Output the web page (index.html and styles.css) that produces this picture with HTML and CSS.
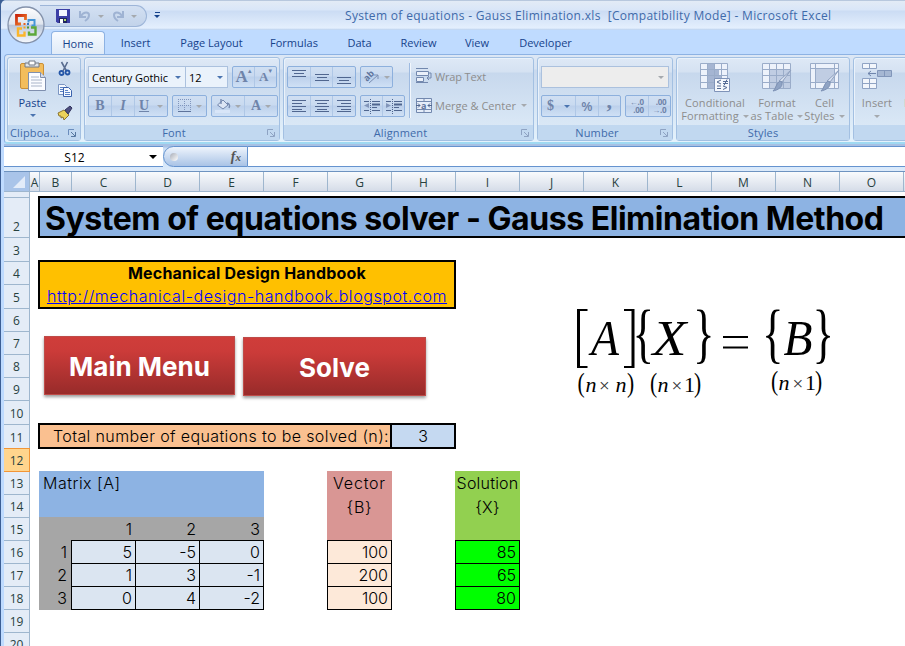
FILE: index.html
```html
<!DOCTYPE html>
<html lang="en">
<head>
  <meta charset="UTF-8">
  <meta name="viewport" content="width=device-width, initial-scale=1.0">
  <title>System of equations - Gauss Elimination.xls</title>
  <link rel="stylesheet" href="styles.css">
</head>
<body>
  <div class="window">
    <header class="titlebar">
      <div class="quick-access">
        <svg width="14" height="14" viewBox="0 0 14 14"><path d="M0 0h14v14H1.500L0 12.500z" fill="#3c3fa6"/><path d="M3 1h8v6H3z" fill="#f4f6ff"/><path d="M3 9h8v5H3z" fill="#20245f"/><path d="M4 10h3v4H4z" fill="#fff"/><path d="M8 10h2v2H8z" fill="#b6df6f"/></svg>
        <svg class="undo" width="12" height="12" viewBox="0 0 12 12"><path d="M1 1v6h6M2 6c3-5 8-4 8-1 0 2-1 4-4 6" fill="none" stroke="#9fb3d3" stroke-width="2"/></svg>
        <i class="arrow pale"></i>
        <svg class="redo" width="12" height="12" viewBox="0 0 12 12"><path d="M11 1v6H5M10 6C7 1 2 2 2 5c0 2 1 4 4 6" fill="none" stroke="#9fb3d3" stroke-width="2"/></svg>
        <i class="arrow pale"></i>
      </div>
      <div class="customize"><i></i><i class="arrow"></i></div>
      <div class="title">System of equations - Gauss Elimination.xls&nbsp; [Compatibility Mode] - Microsoft Excel</div>
    </header>

    <svg class="office" width="38" height="38" viewBox="0 0 38 38">
      <defs>
        <linearGradient id="orb" x1="0" y1="0" x2="0" y2="1"><stop offset="0" stop-color="#fff"/><stop offset=".48" stop-color="#dfe5ee"/><stop offset=".5" stop-color="#b9c6da"/><stop offset="1" stop-color="#f6f9fd"/></linearGradient>
        <linearGradient id="red" x1="0" y1="0" x2="1" y2="1"><stop offset="0" stop-color="#c9260c"/><stop offset="1" stop-color="#f58a2c"/></linearGradient>
      </defs>
      <circle cx="19" cy="19" r="18" fill="url(#orb)" stroke="#8492ab" stroke-width="1.300"/>
      <g fill="none">
        <path d="M14 18H9.500V9.500h9V14" stroke="url(#red)" stroke-width="2.800"/>
        <path d="M21.500 16.500v-2.500h6v5.500h-3" stroke="#4596d8" stroke-width="2"/>
        <path d="M15 22.500h-4v7h6.500v-4" stroke="#fbb52a" stroke-width="2.400"/>
        <path d="M24 21.500h4.500v7h-6.500v-3" stroke="#5da83a" stroke-width="2.400"/>
      </g>
      <path d="M16.500 17h2v2h-2z" fill="#e85f1a"/><path d="M20 17h2v2h-2z" fill="#3577c4"/><path d="M16.500 20.500h2v2h-2z" fill="#f6a51c"/><path d="M20 20.500h2v2h-2z" fill="#4a9a30"/>
    </svg>

    <nav class="tabs">
      <span class="tab active">Home</span>
      <span class="tab insert">Insert</span>
      <span class="tab layout">Page Layout</span>
      <span class="tab formulas">Formulas</span>
      <span class="tab data">Data</span>
      <span class="tab review">Review</span>
      <span class="tab view">View</span>
      <span class="tab developer">Developer</span>
    </nav>

    <section class="ribbon">
      <div class="group clipboard">
        <div class="tools">
          <div class="paste">
            <svg width="26" height="30" viewBox="0 0 26 30"><rect x=".5" y="2.500" width="23" height="25" rx="1.500" fill="#f3bd5c" stroke="#c98f38"/><path d="M5 2h14v4H5z" fill="#dfe3e8" stroke="#717885"/><path d="M9 0h6v4H9z" fill="#fff" stroke="#717885"/><path d="M8.500 11.500h12l5 5v13h-17z" fill="#fbfcff" stroke="#7f8fae"/><path d="M20.500 11.500v5h5" fill="#d5dcea" stroke="#7f8fae"/><path d="M11 16h8M11 19h11M11 22h11M11 25h11" stroke="#a9b4c8"/></svg>
            <span>Paste</span>
            <i class="arrow"></i>
          </div>
          <div class="clip-icons">
            <svg width="16" height="16" viewBox="0 0 16 16"><path d="M4.500 1l5 9M10.500 1L6 10" stroke="#5b6e91" stroke-width="1.600"/><circle cx="4.500" cy="12" r="2" fill="none" stroke="#2456a8" stroke-width="1.800"/><circle cx="10.500" cy="11.500" r="2" fill="none" stroke="#2456a8" stroke-width="1.800"/></svg>
            <svg width="16" height="16" viewBox="0 0 16 16"><path d="M1.500 1.500h6l2 2v8h-8z" fill="#f5f9ff" stroke="#7b95c2"/><path d="M3 4.500h4M3 6.500h4M3 8.500h3" stroke="#5a82c6"/><path d="M6.500 4.500h5l3 3v6h-8z" fill="#f5f9ff" stroke="#3b62ad"/><path d="M8 7.500h3M8 9.500h5M8 11.500h5" stroke="#5a82c6"/></svg>
            <svg width="16" height="16" viewBox="0 0 16 16"><path d="M1 8l6-3 5 5-5 5-1-3-2 1 0-2-2 0z" fill="#ecd25a" stroke="#8b7533"/><path d="M8 5l5-4 2 2-4 6z" fill="#4d4f80" stroke="#32335c"/></svg>
          </div>
        </div>
        <div class="caption"><span>Clipboa...</span><svg class="launcher" width="8" height="8" viewBox="0 0 8 8"><path d="M.5 6V.5H6" fill="none" stroke="#6b8dbd"/><path d="M3 3l4 4M7.500 3v4.500H3" fill="none" stroke="#56779f"/></svg></div>
      </div>

      <div class="group font">
        <div class="tools rows">
          <div class="row">
            <div class="combo family">Century Gothic<i class="arrow"></i></div>
            <div class="combo size">12<i class="arrow"></i></div>
            <div class="set grow">
              <b class="serif big">A<sup>▴</sup></b><b class="serif small">A<sup>▾</sup></b>
            </div>
          </div>
          <div class="row">
            <div class="set biu"><b class="serif">B</b><b class="serif"><em>I</em></b><b class="serif underline"><u>U</u><i class="arrow pale"></i></b></div>
            <div class="set borders"><b><svg width="14" height="14" viewBox="0 0 14 14"><path d="M.5 0v12M6.500 0v12M12.500 0v12M0 .5h14M0 6.500h14" stroke="#8095bd" stroke-dasharray="1 1" fill="none"/><path d="M0 12.500h13" stroke="#5e739b"/></svg><i class="arrow pale"></i></b></div>
            <div class="set fills">
              <b><svg width="16" height="16" viewBox="0 0 16 16"><path d="M2.500 7L8 2l5 5-5 4z" fill="#dce5f4" stroke="#7488ae"/><path d="M6 1v5M12 5c3 1 3 3 2 5" fill="none" stroke="#7488ae" stroke-width="1.400"/><path d="M0 12h15v3H0z" fill="#d8e5f8"/></svg><i class="arrow pale"></i></b>
              <b class="serif">A<i class="arrow pale"></i></b>
            </div>
          </div>
        </div>
        <div class="caption"><span>Font</span><svg class="launcher dim" width="8" height="8" viewBox="0 0 8 8"><path d="M.5 6V.5H6" fill="none" stroke="#8297b8"/><path d="M3 3l4 4M7.500 3v4.500H3" fill="none" stroke="#8297b8"/></svg></div>
      </div>

      <div class="group alignment">
        <div class="tools">
          <div class="rows">
            <div class="row">
              <div class="set three">
                <b><svg width="14" height="14" viewBox="0 0 14 14"><path d="M0 .5h14M2 3.500h10M0 6.500h14" stroke="#50668f"/></svg></b>
                <b><svg width="14" height="14" viewBox="0 0 14 14"><path d="M0 4.500h14M2 7.500h10M0 10.500h14" stroke="#50668f"/></svg></b>
                <b><svg width="14" height="14" viewBox="0 0 14 14"><path d="M0 7.500h14M2 10.500h10M0 13.500h14" stroke="#50668f"/></svg></b>
              </div>
              <div class="set orient"><b><svg width="17" height="16" viewBox="0 0 17 16"><text x="1" y="10" transform="rotate(-45 6 8)" class="glyph">ab</text><path d="M6 14l9-8M15 10V6h-4" stroke="#7b8fb3" fill="none"/></svg><i class="arrow pale"></i></b></div>
            </div>
            <div class="row">
              <div class="set three">
                <b><svg width="14" height="14" viewBox="0 0 14 14"><path d="M0 1.500h14M0 4.500h10M0 7.500h14M0 10.500h10M0 12.500h14" stroke="#50668f"/></svg></b>
                <b><svg width="14" height="14" viewBox="0 0 14 14"><path d="M0 1.500h14M2 4.500h10M0 7.500h14M2 10.500h10M0 12.500h14" stroke="#50668f"/></svg></b>
                <b><svg width="14" height="14" viewBox="0 0 14 14"><path d="M0 1.500h14M4 4.500h10M0 7.500h14M4 10.500h10M0 12.500h14" stroke="#50668f"/></svg></b>
              </div>
              <div class="set indent">
                <b><svg width="16" height="15" viewBox="0 0 16 15"><path d="M0 2.500h5M8 2.500h8M8 8.500h5M0 11.500h5M8 11.500h8" stroke="#50668f"/><path d="M8 5.500h8" stroke="#50668f" stroke-width="2"/><path d="M6.500 0v15" stroke="#50668f" stroke-dasharray="1 1"/><path d="M5 4v5L0 6.500z" fill="#8296ba"/></svg></b>
                <b><svg width="16" height="15" viewBox="0 0 16 15"><path d="M0 2.500h5M8 2.500h8M8 8.500h5M0 11.500h5M8 11.500h8" stroke="#50668f"/><path d="M8 5.500h8" stroke="#50668f" stroke-width="2"/><path d="M6.500 0v15" stroke="#50668f" stroke-dasharray="1 1"/><path d="M0 4v5l5-2.500z" fill="#8296ba"/></svg></b>
              </div>
            </div>
          </div>
          <div class="divider"></div>
          <div class="wide">
            <div class="wide-btn"><svg width="16" height="16" viewBox="0 0 16 16"><path d="M0 .5h12M0 14.500h12" stroke="#7288ae"/><path d="M.5 3.500h12v4H.5zM.5 9.500h7v4h-7z" fill="#eaf0fa" stroke="#7288ae"/><path d="M12 5h3v5h-4m2-2l-2 2 2 2" fill="none" stroke="#7288ae"/></svg><span class="wrap-text">Wrap Text</span></div>
            <div class="wide-btn"><svg width="16" height="15" viewBox="0 0 16 15"><path d="M.5.5h15v14H.5zM.5 3.500h15M.5 11.500h15M8 0v4M8 11v4" fill="#e5edf9" stroke="#7288ae"/><path d="M0 7.500h4M12 7.500h4M2 5.500l2 2-2 2M14 5.500l-2 2 2 2" fill="none" stroke="#50668f"/><text x="5" y="10.500" class="glyph">a</text></svg><span class="merge">Merge &amp; Center</span><i class="arrow pale"></i></div>
          </div>
        </div>
        <div class="caption"><span>Alignment</span><svg class="launcher dim" width="8" height="8" viewBox="0 0 8 8"><path d="M.5 6V.5H6" fill="none" stroke="#8297b8"/><path d="M3 3l4 4M7.500 3v4.500H3" fill="none" stroke="#8297b8"/></svg></div>
      </div>

      <div class="group number">
        <div class="tools rows">
          <div class="row"><div class="combo format"><i class="arrow pale"></i></div></div>
          <div class="row">
            <div class="set money"><b class="serif dollar">$<i class="arrow"></i></b><b class="percent">%</b><b class="serif comma">,</b></div>
            <div class="set decimals"><b><span class="dec">←.0<br>.00</span></b><b><span class="dec">.00<br>→.0</span></b></div>
          </div>
        </div>
        <div class="caption"><span>Number</span><svg class="launcher dim" width="8" height="8" viewBox="0 0 8 8"><path d="M.5 6V.5H6" fill="none" stroke="#8297b8"/><path d="M3 3l4 4M7.500 3v4.500H3" fill="none" stroke="#8297b8"/></svg></div>
      </div>

      <div class="group styles">
        <div class="tools">
          <div class="large conditional">
            <svg width="30" height="29" viewBox="0 0 30 29"><path d="M.5.500h27v25H.5z" fill="#edf2fb"/><path d="M7 1h7v24H7zM14 7h5v6h-5zM14 13h7v6h-7z" fill="#a5b5d2"/><path d="M.5.500h27v25H.5zM.5 6.500h27M.5 12.500h27M.5 19.500h27M7.500.500v25M14.500.500v25M21.500.500v25" fill="none" stroke="#9aacc9"/><path d="M14.500 15.500h15v13h-15z" fill="#f5f8fd" stroke="#7f93b8"/><path d="M21 17l-4 2 4 2M17 23h4M17 25.500h4M23 18.500h5M23 20.500h5M27 16.500l-3 6M23 23l4 1.500-4 2" fill="none" stroke="#566c95"/></svg>
            <span>Conditional<br>Formatting<i class="arrow pale"></i></span>
          </div>
          <div class="large table-style">
            <svg width="30" height="29" viewBox="0 0 30 29"><path d="M.5.500h28v25H.5z" fill="#edf2fb"/><path d="M7.500 6.500h21v19h-21z" fill="#c0cde3"/><path d="M.5.500h28v25H.5zM.5 6.500h28M.5 12.500h28M.5 19.500h28M7.500.500v25M14.500.500v25M21.500.500v25" fill="none" stroke="#9aacc9"/><path d="M29 7L20 19l-3-1z" fill="#dde5f2" stroke="#8fa1c0"/><path d="M20 19c1 5-4 8-9 9 3-2 3-8 7-10z" fill="#8fa3c4" stroke="#7d91b4"/></svg>
            <span>Format<br>as Table<i class="arrow pale"></i></span>
          </div>
          <div class="large cell-style">
            <svg width="30" height="29" viewBox="0 0 30 29"><path d="M.5.500h28v25H.5z" fill="#edf2fb" stroke="#9aacc9"/><path d="M5.500 5.500h19v14h-19z" fill="#c0cde3" stroke="#9aacc9"/><path d="M5.500 0v26M24.500 0v26M0 5.500h29M0 19.500h29" stroke="#9aacc9"/><path d="M29 7L20 19l-3-1z" fill="#dde5f2" stroke="#8fa1c0"/><path d="M20 19c1 5-4 8-9 9 3-2 3-8 7-10z" fill="#8fa3c4" stroke="#7d91b4"/></svg>
            <span>Cell<br>Styles<i class="arrow pale"></i></span>
          </div>
        </div>
        <div class="caption"><span>Styles</span></div>
      </div>

      <div class="group cells">
        <div class="tools">
          <div class="large insert-cells">
            <svg width="30" height="27" viewBox="0 0 30 27"><path d="M.5.500h14v5H.5zM7.500.500v5M.5 15.500h14v10H.5zM7.500 15.500v10M.5 20.500h14" fill="#f2f6fc" stroke="#8fa3c4"/><path d="M15.500 7.500h14v6h-14zM22.500 7.500v6" fill="#a5b7d3" stroke="#8196ba"/><path d="M6 10.500h8M9 8l-3 2.500L9 13" fill="none" stroke="#6f85ac"/></svg>
            <span>Insert<br><i class="arrow pale"></i></span>
          </div>
          <div class="large delete-cells"><span>Delete</span></div>
        </div>
        <div class="caption"></div>
      </div>
    </section>

    <div class="formula-bar">
      <div class="name-box"><span>S12</span><i class="arrow black"></i></div>
      <div class="fx"><i class="knob"></i><span><em>f</em><em class="sub">x</em></span></div>
      <div class="formula"></div>
    </div>

    <main class="sheet">
      <div class="col corner"><svg width="12" height="12" viewBox="0 0 12 12"><path d="M12 0v12H0z" fill="#e3ecf9"/></svg></div>
      <div class="col">A</div><div class="col">B</div><div class="col">C</div><div class="col">D</div><div class="col">E</div><div class="col">F</div><div class="col">G</div><div class="col">H</div><div class="col">I</div><div class="col">J</div><div class="col">K</div><div class="col">L</div><div class="col">M</div><div class="col">N</div><div class="col">O</div><div class="col"></div>

      <div class="row-head r1"></div>
      <div class="row-head r2">2</div>
      <div class="row-head r3">3</div>
      <div class="row-head r4">4</div>
      <div class="row-head r5">5</div>
      <div class="row-head r6">6</div>
      <div class="row-head r7">7</div>
      <div class="row-head r8">8</div>
      <div class="row-head r9">9</div>
      <div class="row-head r10">10</div>
      <div class="row-head r11">11</div>
      <div class="row-head r12 selected">12</div>
      <div class="row-head r13">13</div>
      <div class="row-head r14">14</div>
      <div class="row-head r15">15</div>
      <div class="row-head r16">16</div>
      <div class="row-head r17">17</div>
      <div class="row-head r18">18</div>
      <div class="row-head r19">19</div>
      <div class="row-head r20">20</div>

      <div class="heading">System of equations solver - Gauss Elimination Method</div>
      <div class="handbook">
        <strong>Mechanical Design Handbook</strong>
        <a href="#">http://mechanical-design-handbook.blogspot.com</a>
      </div>
      <div class="total"><div class="total-label">Total number of equations to be solved (n):</div><div class="total-value">3</div></div>

      <div class="matrix-title">Matrix [A]</div>
      <div class="matrix-head">
        <span></span><span>1</span><span>2</span><span>3</span>
      </div>
      <div class="matrix-side"><span>1</span><span>2</span><span>3</span></div>
      <div class="matrix values">
        <span>5</span><span>-5</span><span>0</span>
        <span>1</span><span>3</span><span>-1</span>
        <span>0</span><span>4</span><span>-2</span>
      </div>

      <div class="vector-title">Vector<br>{B}</div>
      <div class="vector values"><span>100</span><span>200</span><span>100</span></div>
      <div class="solution-title">Solution<br>{X}</div>
      <div class="solution values"><span>85</span><span>65</span><span>80</span></div>

      <button class="shape main-menu">Main Menu</button>
      <button class="shape solve">Solve</button>

      <svg class="equation" width="270" height="100" viewBox="570 303 270 100">
        <path d="M587.500 310h-9v57h9M624 310h9v57h-9" fill="none" stroke="#000" stroke-width="2"/>
        <path d="M578.500 309v59M633 309v59" stroke="#000" stroke-width="3"/>
        <g class="brace">
          <text transform="translate(632.500 354.500) scale(.68 1)">{</text>
          <text transform="translate(693 354.500) scale(.68 1)">}</text>
          <text transform="translate(762 354.500) scale(.68 1)">{</text>
          <text transform="translate(812.500 354.500) scale(.68 1)">}</text>
        </g>
        <g class="var">
          <text x="591" y="355" textLength="28" lengthAdjust="spacingAndGlyphs">A</text>
          <text x="652.500" y="355" textLength="34" lengthAdjust="spacingAndGlyphs">X</text>
          <text x="783.500" y="355" textLength="29" lengthAdjust="spacingAndGlyphs">B</text>
        </g>
        <path d="M723 337h25M723 347.500h25" stroke="#000" stroke-width="2"/>
        <g class="paren">
          <text transform="translate(577.500 392) scale(.8 1)">(</text><text transform="translate(627 392) scale(.8 1)">)</text>
          <text transform="translate(650 392) scale(.8 1)">(</text><text transform="translate(694 392) scale(.8 1)">)</text>
          <text transform="translate(771 390) scale(.8 1)">(</text><text transform="translate(815 390) scale(.8 1)">)</text>
        </g>
        <g class="dim-text">
          <text x="585.500" y="392" class="it">n</text><text x="615.500" y="392" class="it">n</text>
          <text x="657.500" y="392" class="it">n</text><text x="684" y="392">1</text>
          <text x="778.500" y="390" class="it">n</text><text x="805" y="390">1</text>
        </g>
        <g class="times">
          <text x="599" y="392">×</text><text x="671.500" y="392">×</text><text x="792.500" y="390">×</text>
        </g>
      </svg>
    </main>
  </div>
</body>
</html>
```

FILE: styles.css
```css
* {
  box-sizing: border-box;
}

body {
  margin: 0;
  height: 646px;
  overflow: hidden;
  font-family: 'Open Sans', 'Noto Sans', sans-serif;
  font-size: 11px;
  color: #15428b;
  background: #3d5f95;
}

.window {
  position: relative;
  height: 646px;
  display: flex;
  flex-direction: column;
  border-left: 1px solid #3d5f95;
  border-radius: 6px 0 0 0;
  background: #bfdbff;
  overflow: hidden;
}

svg {
  flex: none;
  display: block;
  overflow: visible;
}

.arrow {
  display: inline-block;
  flex: none;
  border: 3px solid transparent;
  border-top-color: #4a74b0;
  border-bottom: 0;
}

.arrow.pale {
  border-top-color: #a5a9ae;
}

.arrow.black {
  border-width: 4px 4px 0;
  border-top-color: #000;
}

/* title bar */
.titlebar {
  height: 30px;
  flex: none;
  display: flex;
  align-items: flex-start;
  background: linear-gradient(#e3ebf6 0, #d9e6f8 9px, #cbdcf4 10px, #e4effd 27px, #b9d0ee 29px);
  border-top: 1px solid #b8c8de;
}

.quick-access {
  width: 107px;
  height: 22px;
  margin: 4px 0 0 39px;
  padding-left: 16px;
  display: flex;
  align-items: center;
  border: 1px solid #9db5d8;
  border-left: 0;
  border-radius: 0 11px 11px 0;
  background: linear-gradient(#d3e0f2, #c2d3ea);
}

.undo {
  margin: 0 7px 0 9px;
}

.redo {
  margin: 0 7px 0 8px;
}

.customize {
  display: flex;
  flex-direction: column;
  align-items: center;
  gap: 2px;
  margin: 11px 0 0 7px;
}

.customize i:first-child {
  width: 5px;
  height: 1px;
  background: #15428b;
}

.customize .arrow {
  border-top-color: #15428b;
}

.title {
  margin: 6px 0 0 185px;
  font-size: 12px;
  line-height: 17px;
  white-space: nowrap;
  color: #3e6aaa;
  letter-spacing: 0.32px;
}

.office {
  position: absolute;
  left: 6px;
  top: 6px;
}

/* tabs */
.tabs {
  height: 24px;
  flex: none;
  display: flex;
  padding-left: 50px;
  line-height: 26px;
}

.tab {
  text-align: center;
  white-space: nowrap;
}

.active {
  width: 54px;
  margin-top: 1px;
  height: 24px;
  line-height: 23px;
  border: 1px solid #8db2e3;
  border-bottom: 0;
  border-radius: 4px 4px 0 0;
  background: linear-gradient(#f6faff, #dfeaf7);
}

.insert { width: 61px; }
.layout { width: 91px; }
.formulas { width: 74px; }
.data { width: 57px; }
.review { width: 61px; }
.view { width: 56px; }
.developer { width: 81px; }

/* ribbon */
.ribbon {
  height: 90px;
  flex: none;
  display: flex;
  gap: 3px;
  margin-left: 3px;
  padding: 2px 0 4px 2px;
  border: 1px solid #8db2e3;
  border-right: 0;
  border-bottom: 2px solid #9fd9f2;
  border-radius: 4px 0 0 4px;
  background: linear-gradient(#dce7f5 0, #d5e2f2 14px, #c9d9ee 15px, #e4f2fc);
}

.group {
  flex: none;
  display: flex;
  flex-direction: column;
  height: 84px;
  border: 1px solid #a3c0e2;
  border-radius: 3px;
  background: linear-gradient(#dee9f6 0, #d5e2f2 14px, #c7d8ed 15px, #dae8f6 68px);
  box-shadow: inset 1px 1px 0 #eaf2fb;
}

.clipboard { width: 74px; }
.font { width: 196px; }
.alignment { width: 251px; }
.number { width: 136px; }
.styles { width: 174px; }
.cells { width: 120px; }

.tools {
  height: 67px;
  flex: none;
  display: flex;
}

.caption {
  flex: 1;
  display: flex;
  align-items: center;
  justify-content: center;
  line-height: 14px;
  color: #3e6aaa;
  background: #c1d8f0;
}

.caption span {
  flex: 1;
  text-align: center;
  padding-right: 4px;
  letter-spacing: 0.15px;
}

.clipboard .caption span {
  padding: 0;
  text-align: left;
  margin-left: 2px;
}

.launcher {
  margin-right: 4px;
}

.dim {
  opacity: 0.8;
}

.paste {
  width: 49px;
  display: flex;
  flex-direction: column;
  align-items: center;
  padding-top: 3px;
}

.paste span {
  margin-top: 4px;
  line-height: 16px;
}

.paste .arrow {
  margin-top: 3px;
}

.clip-icons {
  display: flex;
  flex-direction: column;
  gap: 6px;
  padding-top: 3px;
}

.rows {
  display: flex;
  flex-direction: column;
  gap: 7px;
  padding: 8px 0 0 3px;
}

.row {
  height: 22px;
  display: flex;
  gap: 4px;
}

.combo {
  display: flex;
  align-items: center;
  justify-content: space-between;
  height: 22px;
  padding: 0 4px 0 3px;
  border: 1px solid #abc1de;
  background: #eaf2fb;
  color: #000;
  white-space: nowrap;
}

.family {
  width: 98px;
  letter-spacing: -0.05px;
}

.size {
  width: 43px;
  margin-left: -5px;
}

.format {
  width: 128px;
  justify-content: flex-end;
  background: #ededed;
}

.set {
  display: flex;
  height: 22px;
  border: 1px solid #8db0dd;
  border-radius: 2px;
  background: linear-gradient(#d0dff2 0, #c9daf0 9px, #bcd0eb 10px, #cfe0f5);
}

.set b {
  flex: 1;
  display: flex;
  align-items: center;
  justify-content: center;
  gap: 4px;
  font-weight: normal;
  color: #6f84aa;
}

.set b + b {
  border-left: 1px solid #afc7e6;
}

.set .serif {
  font: bold 14px 'Liberation Serif', serif;
}

.set .big {
  font-size: 17px;
}

.set .small {
  font-size: 13px;
}

.set sup {
  font: 7px 'DejaVu Sans', sans-serif;
  align-self: flex-start;
  margin-left: -4px;
}

.grow { width: 45px; }
.biu { width: 80px; }
.biu .underline { flex: 0 0 33px; gap: 8px; }
.borders { width: 35px; }
.fills { width: 67px; }
.three { width: 69px; }
.orient { width: 33px; }
.indent { width: 45px; }
.money { width: 80px; }
.money .dollar { flex: 0 0 33px; gap: 10px; }
.decimals { width: 46px; }

.set .percent {
  font-size: 13px;
  font-weight: 600;
}

.set .comma {
  font-size: 22px;
  padding-bottom: 10px;
}

.dec {
  font: bold 8px/8px 'Open Sans', sans-serif;
  text-align: right;
  letter-spacing: -0.3px;
}

.glyph {
  font: bold 9px 'Open Sans', sans-serif;
  fill: #60769e;
}

.divider {
  width: 2px;
  height: 55px;
  margin: 5px 0 0 4px;
  border-left: 1px solid #9ebae0;
  border-right: 1px solid #f2f7fd;
}

.wide {
  display: flex;
  flex-direction: column;
  gap: 13px;
  padding: 10px 0 0 5px;
  color: #8d8d8d;
}

.wide-btn {
  display: flex;
  align-items: center;
  gap: 3px;
  height: 16px;
  white-space: nowrap;
}

.wrap-text {
  letter-spacing: -0.15px;
}

.wide-btn .arrow {
  margin-left: 2px;
}

.large {
  display: flex;
  flex-direction: column;
  align-items: center;
  padding-top: 5px;
  color: #8d8d8d;
  white-space: nowrap;
  text-align: center;
  line-height: 13px;
}

.large span {
  margin-top: 4px;
  letter-spacing: 0.1px;
}

.large .arrow {
  margin: 0 0 2px 4px;
}

.conditional { width: 76px; }
.table-style { width: 48px; }
.cell-style { width: 47px; }
.insert-cells { width: 46px; }

.insert-cells span {
  margin-top: 6px;
}

.insert-cells .arrow {
  margin-left: 0;
}

.delete-cells {
  padding: 38px 0 0 4px;
}

.delete-cells span {
  margin: 0;
}

.styles .caption span {
  padding: 0;
}

/* formula bar */
.formula-bar {
  height: 28px;
  flex: none;
  display: flex;
  margin-left: 3px;
  padding: 2px 0 4px;
  border-bottom: 1px solid #6e93c0;
  background: linear-gradient(#a8c1e4 0, #a8c1e4 3px, #c8ddf5 4px, #dcebfb);
}

.name-box {
  width: 159px;
  display: flex;
  align-items: center;
  border: solid #6593cf;
  border-width: 1px 0;
  background: #fff;
  color: #000;
  font-size: 12px;
}

.name-box span {
  flex: 1;
  text-align: center;
  padding-right: 4px;
  padding-top: 1px;
}

.name-box .arrow {
  margin-right: 6px;
}

.fx {
  width: 85px;
  display: flex;
  align-items: center;
  justify-content: space-between;
  padding: 0 6px 0 6px;
  border: 1px solid #6593cf;
  border-radius: 11px 0 0 11px;
  background: linear-gradient(#eef4fc, #a9c3e6);
  font: bold 14px 'Liberation Serif', serif;
  color: #555;
}

.fx .sub {
  font-size: 11px;
}

.knob {
  width: 8px;
  height: 8px;
  border-radius: 50%;
  background: linear-gradient(135deg, #a8adb8, #fff);
}

.formula {
  flex: 1;
  border: solid #6593cf;
  border-width: 1px 0;
  background: #fff;
}

/* worksheet */
.sheet {
  position: relative;
  flex: 1;
  margin-left: 3px;
  display: grid;
  grid-template-columns: 26px 10px 32px repeat(14, 64px);
  grid-template-rows: 20px 6px 40px 24px 23px 24px 23px 23px 23px 23px 24px 24px 23px repeat(8, 23px);
  overflow: hidden;
  background: #fff;
  color: #000;
  font-family: 'Century Gothic', Inter, sans-serif;
  font-size: 16px;
  font-weight: 300;
}

.col,
.row-head {
  border-right: 1px solid #9eb6ce;
  border-bottom: 1px solid #9eb6ce;
  font: 12px 'Open Sans', sans-serif;
  color: #27413e;
  text-align: center;
}

.col {
  grid-row: 1;
  line-height: 21px;
  background: linear-gradient(#f9fbfd, #d5dce8);
}

.corner {
  display: flex;
  align-items: flex-end;
  justify-content: flex-end;
  padding: 0 4px 3px 0;
  background: #a9c4e9;
}

.row-head {
  grid-column: 1;
  display: flex;
  align-items: flex-end;
  justify-content: center;
  line-height: 20px;
  background: #e4ecf7;
}

.row-head.selected {
  background: #ffd58d;
  border-color: #f29536;
  box-shadow: 0 -1px 0 #f29536;
}

.r1 { grid-row: 2; }
.r2 { grid-row: 3; }
.r3 { grid-row: 4; }
.r4 { grid-row: 5; }
.r5 { grid-row: 6; }
.r6 { grid-row: 7; }
.r7 { grid-row: 8; }
.r8 { grid-row: 9; }
.r9 { grid-row: 10; }
.r10 { grid-row: 11; }
.r11 { grid-row: 12; }
.r12 { grid-row: 13; }
.r13 { grid-row: 14; }
.r14 { grid-row: 15; }
.r15 { grid-row: 16; }
.r16 { grid-row: 17; }
.r17 { grid-row: 18; }
.r18 { grid-row: 19; }
.r19 { grid-row: 20; }
.r20 { grid-row: 21; }

.heading {
  grid-area: 3 / 3 / 4 / 18;
  margin: -2px 0 0 -2px;
  padding-left: 5px;
  border: 2px solid #000;
  background: #8db3e3;
  font-size: 32px;
  line-height: 41px;
  font-weight: 700;
  white-space: nowrap;
  letter-spacing: -0.46px;
}

.handbook {
  grid-area: 5 / 3 / 7 / 10;
  margin: -2px 0 0 -2px;
  border: 2px solid #000;
  background: #ffc000;
  text-align: center;
  white-space: nowrap;
  line-height: 23px;
}

.handbook strong,
.handbook a {
  display: block;
}

.handbook strong {
  font-weight: 700;
  letter-spacing: 0.2px;
}

.handbook a {
  color: #0000ff;
  letter-spacing: 0.57px;
}

.total {
  grid-area: 12 / 3 / 13 / 10;
  display: flex;
  margin: -2px 0 0 -2px;
  border: 2px solid #000;
  line-height: 22px;
  white-space: nowrap;
}

.total-label {
  flex: 1;
  padding-right: 1px;
  text-align: right;
  background: #fac090;
  letter-spacing: 0.38px;
}

.total-value {
  width: 64px;
  border-left: 2px solid #000;
  text-align: center;
  background: #c5d9f1;
}

.matrix-title {
  grid-area: 14 / 3 / 16 / 7;
  margin: -1px 0 0 -1px;
  padding-left: 4px;
  line-height: 24px;
  background: #8db3e3;
  letter-spacing: 0.5px;
}

.matrix-head {
  grid-area: 16 / 3 / 17 / 7;
  display: grid;
  grid-template-columns: 32px repeat(3, 64px);
  margin: -1px 0 0 -1px;
  padding-left: 1px;
  background: #a6a6a6;
  text-align: right;
  line-height: 24px;
}

.matrix-head span {
  padding-right: 4px;
}

.matrix-side {
  grid-area: 17 / 3 / 20 / 4;
  display: flex;
  flex-direction: column;
  margin: -1px 0 0 -1px;
  padding-right: 5px;
  background: #a6a6a6;
  text-align: right;
}

.matrix-side span {
  height: 23px;
  line-height: 24px;
}

.values {
  display: grid;
  grid-auto-rows: 23px;
  margin: -1px 0 0 -1px;
  border: solid #000;
  border-width: 1px 0 0 1px;
  text-align: right;
  line-height: 22px;
}

.values span {
  height: 23px;
  padding-right: 3px;
  border: solid #000;
  border-width: 0 1px 1px 0;
}

.matrix {
  grid-area: 17 / 4 / 20 / 7;
  grid-template-columns: repeat(3, 64px);
  background: #dbe5f1;
}

.vector-title,
.solution-title {
  text-align: center;
  margin: -1px 0 0 -1px;
  line-height: 24px;
}

.vector-title {
  grid-area: 14 / 8 / 17 / 9;
  background: #d99694;
  letter-spacing: 0.8px;
}

.vector {
  grid-area: 17 / 8 / 20 / 9;
  background: #fde9d9;
}

.solution-title {
  grid-area: 14 / 10 / 17 / 11;
  background: #92d050;
  letter-spacing: 0.2px;
}

.solution {
  grid-area: 17 / 10 / 20 / 11;
  background: #00ff00;
}

/* shapes floating over the cells */
.shape {
  position: absolute;
  height: 59px;
  padding: 2px 0 0;
  border: 1px solid #be4b48;
  background: linear-gradient(#cf3d3a 0, #cb3b39 25%, #982b2a);
  box-shadow: 0 2px 3px rgba(0, 0, 0, 0.4);
  color: #fff;
  font: 700 26px 'Century Gothic', Inter, sans-serif;
}

.main-menu {
  left: 40px;
  top: 164px;
  width: 191px;
}

.solve {
  left: 239px;
  top: 165px;
  width: 183px;
}

.equation {
  position: absolute;
  left: 566px;
  top: 131px;
  font-family: 'Liberation Serif', serif;
}

.brace {
  font-size: 66px;
}

.var {
  font-size: 51px;
  font-style: italic;
}

.paren {
  font-size: 27px;
}

.dim-text {
  font-size: 22px;
}

.times {
  font-size: 19px;
  fill: #333;
}

.it {
  font-style: italic;
}
```
